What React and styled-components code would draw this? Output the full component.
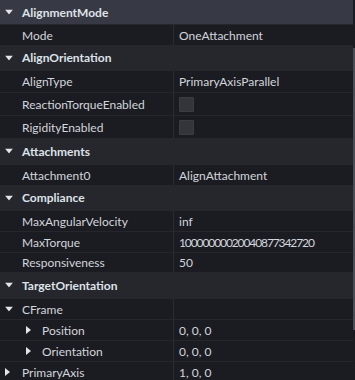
import styled, { createGlobalStyle } from "styled-components";

const GlobalStyle = createGlobalStyle`
  html, body {
    margin: 0;
    padding: 0;
    background: #1b1c21;
  }
  body {
    font-family: "Lato", "Noto Sans", sans-serif;
    overflow: hidden;
  }
`;

const sections = [
  {
    title: "AlignmentMode",
    active: true,
    height: 24,
    rows: [{ name: "Mode", value: "OneAttachment", height: 21 }],
  },
  {
    title: "AlignOrientation",
    height: 25,
    rows: [
      { name: "AlignType", value: "PrimaryAxisParallel", height: 22 },
      { name: "ReactionTorqueEnabled", check: true, height: 23 },
      { name: "RigidityEnabled", check: true, height: 23 },
    ],
  },
  {
    title: "Attachments",
    height: 26,
    rows: [{ name: "Attachment0", value: "AlignAttachment", height: 21 }],
  },
  {
    title: "Compliance",
    height: 25,
    rows: [
      { name: "MaxAngularVelocity", value: "inf", height: 21 },
      { name: "MaxTorque", value: "10000000020040877342720", tight: true, height: 21 },
      { name: "Responsiveness", value: "50", height: 20 },
    ],
  },
  {
    title: "TargetOrientation",
    height: 26,
    rows: [
      { name: "CFrame", value: "", arrow: "down", height: 21 },
      { name: "Position", value: "0, 0, 0", arrow: "right", level: 1, height: 21 },
      { name: "Orientation", value: "0, 0, 0", arrow: "right", level: 1, height: 21 },
      { name: "PrimaryAxis", value: "1, 0, 0", arrow: "right", height: 21 },
    ],
  },
];

const Arrow = ({ dir }) =>
  dir === "down" ? (
    <svg width="8" height="5" viewBox="0 0 8 5">
      <path d="M0 0 L8 0 L4 5 Z" fill="#e3e5ea" />
    </svg>
  ) : (
    <svg width="5" height="8" viewBox="0 0 5 8">
      <path d="M0 0 L5 4 L0 8 Z" fill="#e3e5ea" />
    </svg>
  );

const App = () => {
  return (
    <>
      <GlobalStyle />
      <Panel>
        <List>
          {sections.map((s) => (
            <div key={s.title}>
              <Header $active={s.active} $h={s.height}>
                <Toggle>
                  <Arrow dir="down" />
                </Toggle>
                {s.title}
              </Header>
              {s.rows.map((r) => (
                <Row key={r.name} $h={r.height}>
                  <Name $level={r.level || 0}>
                    {r.arrow && (
                      <Toggle $level={r.level || 0}>
                        <Arrow dir={r.arrow} />
                      </Toggle>
                    )}
                    {r.name}
                  </Name>
                  <Value $tight={r.tight}>{r.check ? <Check /> : r.value}</Value>
                </Row>
              ))}
            </div>
          ))}
        </List>
        <Scrollbar>
          <Thumb />
        </Scrollbar>
      </Panel>
    </>
  );
};

const Panel = styled.div`
  display: flex;
  width: 355px;
  height: 380px;
  overflow: hidden;
  background: #1b1c21;
`;

const List = styled.div`
  flex: 1;
  min-width: 0;
`;

const Header = styled.div`
  position: relative;
  display: flex;
  align-items: center;
  height: ${(p) => p.$h}px;
  padding-left: 22px;
  box-sizing: border-box;
  background: ${(p) => (p.$active ? "#373a44" : "#25272d")};
  color: #dfe2e8;
  font-size: 12px;
  font-weight: 700;
`;

const Toggle = styled.span`
  position: absolute;
  left: ${(p) => 5 + (p.$level || 0) * 21}px;
  top: 50%;
  transform: translateY(-50%);
  display: flex;
`;

const Row = styled.div`
  display: grid;
  grid-template-columns: 174px 1fr;
  height: ${(p) => p.$h}px;
  box-sizing: border-box;
  border-top: 1px solid #25272c;
  color: #d2d5dc;
  font-size: 12px;
`;

const Name = styled.div`
  position: relative;
  display: flex;
  align-items: center;
  padding-left: ${(p) => 22 + p.$level * 20}px;
  border-right: 1px solid #2a2c32;
  white-space: nowrap;
`;

const Value = styled.div`
  display: flex;
  align-items: center;
  padding-left: 5px;
  white-space: nowrap;
  letter-spacing: ${(p) => (p.$tight ? "-1.1px" : "0")};
`;

const Check = styled.span`
  width: 15px;
  height: 15px;
  box-sizing: border-box;
  background: #33353b;
  border: 1px solid #3b3d44;
  border-radius: 1px;
`;

const Scrollbar = styled.div`
  width: 2px;
  display: flex;
  flex-direction: column;
  padding-top: 48px;
  background: #1b1c21;
`;

const Thumb = styled.div`
  height: 282px;
  background: #4a4d56;
`;

export default App;
